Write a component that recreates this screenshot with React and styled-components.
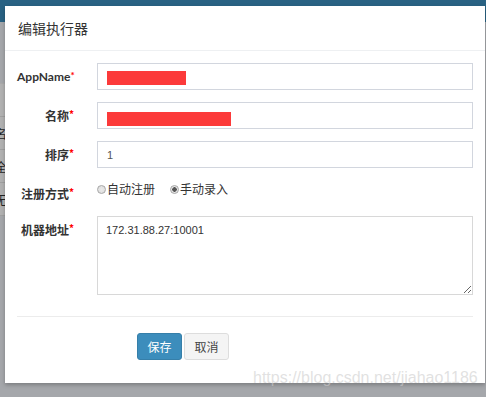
import React from 'react';
import styled, { createGlobalStyle } from 'styled-components';

const GlobalStyle = createGlobalStyle`
  html, body {
    margin: 0;
    padding: 0;
    background: #ecf0f5;
  }
  * {
    box-sizing: border-box;
  }
`;

const CN = `'Noto Sans CJK SC', 'Noto Sans', sans-serif`;
const LATIN = `'Liberation Sans', Arial, 'Noto Sans CJK SC', sans-serif`;

// page behind the modal
const Frame = styled.div`
  position: relative;
  width: 486px;
  height: 397px;
  overflow: hidden;
  background: #ecf0f5;
  font-family: ${CN};
`;

const TopBar = styled.div`
  height: 22px;
  background: #3c8dbc;
`;

const Content = styled.div`
  padding-top: 61px;
`;

const Table = styled.div`
  width: 200px;
  margin-left: -30px;
  background: #fff;
  border-top: 1px solid #f4f4f4;
`;

const TableRow = styled.div`
  height: 33px;
  padding-left: 25px;
  border-bottom: 1px solid #e6e6e6;
  display: flex;
  align-items: center;
  font-size: 12px;
  color: #333;
  white-space: nowrap;
`;

const Backdrop = styled.div`
  position: absolute;
  inset: 0;
  background: rgba(0, 0, 0, 0.3);
`;

const Watermark = styled.div`
  position: absolute;
  left: 253px;
  top: 369px;
  font-family: ${LATIN};
  font-size: 16px;
  color: rgba(205, 205, 205, 0.6);
  white-space: nowrap;
`;

// modal
const Dialog = styled.div`
  position: absolute;
  left: 5px;
  top: 6px;
  width: 480px;
  height: 377px;
  background: #fff;
  box-shadow: 0 2px 4px rgba(0, 0, 0, 0.25);
  display: flex;
  flex-direction: column;
`;

const Header = styled.div`
  height: 45px;
  padding: 0 13px;
  display: flex;
  align-items: center;
  border-bottom: 1px solid #eef0f2;
`;

const Title = styled.h4`
  margin: 0;
  font-size: 14px;
  font-weight: 400;
  color: #333;
`;

const Body = styled.div`
  padding: 12px 12px 0;
  display: flex;
  flex-direction: column;
  gap: 12px;
`;

const Row = styled.div`
  display: flex;
  align-items: ${({ $top }) => ($top ? 'flex-start' : 'center')};
  gap: 23px;
  height: ${({ $height }) => ($height ? `${$height}px` : 'auto')};
`;

const FieldLabel = styled.label`
  width: 57px;
  flex: none;
  text-align: right;
  white-space: nowrap;
  font-family: ${({ $latin }) => ($latin ? `Lato, ${CN}` : CN)};
  font-size: 12px;
  font-weight: 700;
  line-height: 16px;
  color: #333;
  padding-top: ${({ $pad }) => ($pad ? `${$pad}px` : '0')};
`;

const Star = styled.span`
  color: #f00;
  font-size: 10px;
  vertical-align: top;
  line-height: 12px;
`;

const TextBox = styled.div`
  flex: 1;
  height: 27px;
  border: 1px solid #d2d6de;
  padding: 0 9px;
  display: flex;
  align-items: center;
  font-family: ${LATIN};
  font-size: 11px;
  color: #555;
`;

const Redact = styled.span`
  display: block;
  width: ${({ $w }) => $w}px;
  height: 14px;
  margin-top: ${({ $dy }) => $dy}px;
  background: #fc3a3a;
`;

const RadioGroup = styled.div`
  display: flex;
  align-items: center;
  gap: 15px;
  padding-top: 1px;
  font-size: 12px;
  line-height: 16px;
  color: #333;
`;

const Radio = styled.span`
  display: inline-flex;
  align-items: center;
  gap: 1px;
`;

const RadioDot = styled.span`
  width: 9px;
  height: 9px;
  border-radius: 50%;
  border: 1px solid #a6a6a6;
  background: radial-gradient(
    circle,
    ${({ $on }) => ($on ? '#555 0 2px, #e6e6e6 2.5px' : '#e9e9e9 0, #dcdcdc 100%')}
  );
`;

const TextArea = styled.textarea`
  flex: 1;
  height: 79px;
  margin: 0;
  border: 1px solid #d8d8d8;
  border-radius: 0;
  padding: 6px 8px;
  font-family: ${LATIN};
  font-size: 11px;
  line-height: 14px;
  color: #333;
  outline: none;
`;

const Divider = styled.hr`
  margin: 9px 0 4px;
  border: 0;
  border-top: 1px solid #ececec;
`;

const Actions = styled.div`
  display: flex;
  gap: 2px;
  padding-left: 120px;
`;

const Button = styled.button`
  width: 45px;
  height: 27px;
  padding: 0;
  border-radius: 3px;
  font-family: ${CN};
  font-size: 12px;
  border: 1px solid ${({ $primary }) => ($primary ? '#367fa9' : '#dddddd')};
  background: ${({ $primary }) => ($primary ? '#3c8dbc' : '#f4f4f4')};
  color: ${({ $primary }) => ($primary ? '#fff' : '#444')};
`;

function Label({ children, latin, pad }) {
  return (
    <FieldLabel $latin={latin} $pad={pad}>
      {children}
      <Star>*</Star>
    </FieldLabel>
  );
}

export default function App() {
  return (
    <>
      <GlobalStyle />
      <Frame>
        <TopBar />
        <Content>
          <Table>
            <TableRow />
            <TableRow>名称</TableRow>
            <TableRow>全部</TableRow>
            <TableRow>无</TableRow>
          </Table>
        </Content>
        <Backdrop />

        <Dialog>
          <Header>
            <Title>编辑执行器</Title>
          </Header>
          <Body>
            <Row>
              <Label latin>AppName</Label>
              <TextBox>
                <Redact $w={79} $dy={3} />
              </TextBox>
            </Row>
            <Row>
              <Label>名称</Label>
              <TextBox>
                <Redact $w={124} $dy={6} />
              </TextBox>
            </Row>
            <Row>
              <Label>排序</Label>
              <TextBox>1</TextBox>
            </Row>
            <Row $top $height={24}>
              <Label pad={6}>注册方式</Label>
              <RadioGroup>
                <Radio>
                  <RadioDot />
                  自动注册
                </Radio>
                <Radio>
                  <RadioDot $on />
                  手动录入
                </Radio>
              </RadioGroup>
            </Row>
            <Row $top>
              <Label pad={6}>机器地址</Label>
              <TextArea readOnly defaultValue="172.31.88.27:10001" />
            </Row>
            <Divider />
            <Actions>
              <Button $primary>保存</Button>
              <Button>取消</Button>
            </Actions>
          </Body>
        </Dialog>

        <Watermark>https://blog.csdn.net/jiahao1186</Watermark>
      </Frame>
    </>
  );
}
